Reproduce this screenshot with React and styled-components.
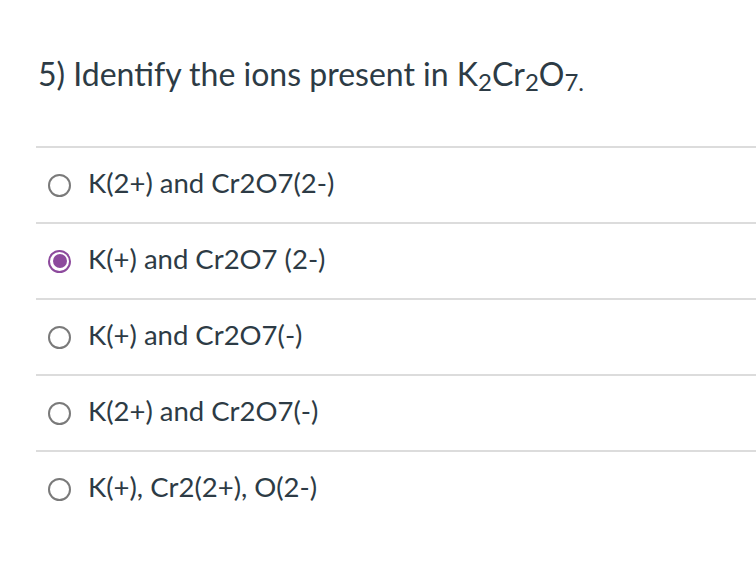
import React from "react";
import styled, { createGlobalStyle } from "styled-components";

const GlobalStyle = createGlobalStyle`
  html, body {
    margin: 0;
    padding: 0;
    background: #ffffff;
  }
  body {
    font-family: Lato, "Open Sans", sans-serif;
    color: #2d3b45;
  }
`;

const options = [
  { id: "a", label: "K(2+) and Cr2O7(2-)" },
  { id: "b", label: "K(+) and Cr2O7 (2-)", checked: true },
  { id: "c", label: "K(+) and Cr2O7(-)" },
  { id: "d", label: "K(2+) and Cr2O7(-)" },
  { id: "e", label: "K(+), Cr2(2+), O(2-)" },
];

function App() {
  return (
    <>
      <GlobalStyle />
      <Question>
        <Title>
          5) Identify the ions present in K<Sub>2</Sub>Cr<Sub>2</Sub>O
          <Sub>7.</Sub>
        </Title>
        <Answers>
          {options.map((o) => (
            <Answer key={o.id}>
              <Radio $checked={o.checked} />
              <Label>{o.label}</Label>
            </Answer>
          ))}
        </Answers>
      </Question>
    </>
  );
}

const Question = styled.div`
  padding: 52px 0 0 36px;
  width: 720px;
`;

const Title = styled.h2`
  margin: 0 0 0 2px;
  font-size: 32px;
  font-weight: 400;
  line-height: 44px;
  letter-spacing: 0;
  white-space: nowrap;
`;

const Sub = styled.sub`
  font-size: 0.75em;
  line-height: 0;
  vertical-align: -0.2em;
`;

const Answers = styled.div`
  margin-top: 50px;
  border-top: 2px solid #dcdcdc;
`;

const Answer = styled.label`
  height: 74px;
  display: flex;
  align-items: center;
  padding-left: 12px;

  & + & {
    border-top: 2px solid #dcdcdc;
  }
`;

const Radio = styled.span`
  box-sizing: border-box;
  width: 23px;
  height: 23px;
  border-radius: 50%;
  border: 2px solid ${(p) => (p.$checked ? "#8d4a9d" : "#7a7a7a")};
  display: flex;
  align-items: center;
  justify-content: center;
  margin-right: 17px;
  flex-shrink: 0;

  &::after {
    content: "";
    display: ${(p) => (p.$checked ? "block" : "none")};
    width: 14px;
    height: 14px;
    border-radius: 50%;
    background: #8d4a9d;
  }
`;

const Label = styled.span`
  font-size: 27.5px;
  line-height: 30px;
  padding-bottom: 4px;
  white-space: nowrap;
`;

export default App;
